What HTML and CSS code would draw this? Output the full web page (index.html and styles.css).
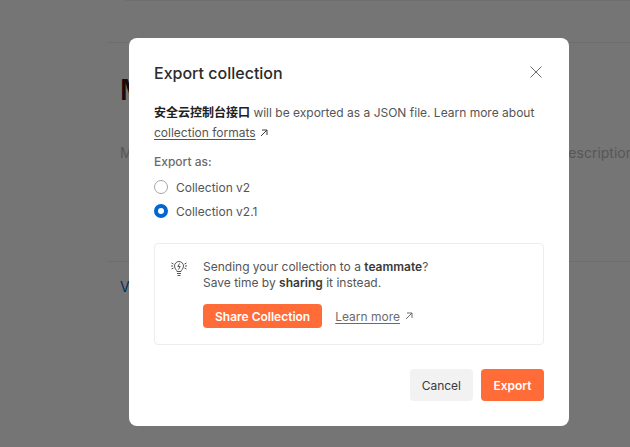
FILE: index.html
```html
<!DOCTYPE html>
<html lang="en">
<head>
    <meta charset="UTF-8">
    <meta name="viewport" content="width=device-width, initial-scale=1.0">
    <title>Export collection</title>
    <link rel="stylesheet" href="styles.css">
</head>
<body>

<!-- page behind the dialog, only what shows around it -->
<div class="page">
    <div class="page-top"></div>
    <div class="page-heading">
        <h1>M</h1>
        <div class="page-desc">
            <span>M</span>
            <span>escription</span>
        </div>
    </div>
    <a class="page-link" href="#">V</a>
</div>

<div class="overlay">
    <div class="modal">
        <div class="modal-header">
            <h2>Export collection</h2>
            <button class="close-btn" aria-label="Close">
                <svg width="12" height="12" viewBox="0 0 12 12"><path d="M.5.5l11 11M11.500.5l-11 11" fill="none" stroke="#6b6b6b"/></svg>
            </button>
        </div>

        <p class="intro">
            <strong class="cjk">安全云控制台接口</strong> will be exported as a JSON file. Learn more about
            <a href="#">collection formats</a>
            <svg class="arrow" width="8" height="8" viewBox="0 0 8 8"><path d="M1 7l6-6M2 1h5v5" fill="none" stroke="#3a3a3a" stroke-width="1"/></svg>
        </p>

        <div class="export-as">Export as:</div>
        <label class="radio-row"><span class="radio"></span>Collection v2</label>
        <label class="radio-row"><span class="radio checked"></span>Collection v2.1</label>

        <div class="share-box">
            <svg class="bulb" width="18" height="18" viewBox="0 0 18 18" fill="none" stroke="#555">
                <path d="M7 12.500c0-1.500-2.500-2.500-2.500-5.500a4.500 4.500 0 0 1 9 0c0 3-2.500 4-2.500 5.500z"/>
                <path d="M7 14.500h4M7.500 16.500h3"/>
                <path d="M9.500 4.500L7.800 7.500h2.400L8.500 10.500"/>
                <path d="M1.500 4l2 1M1.500 10l2-1M1 7h2M16.500 4l-2 1M16.500 10l-2-1M17 7h-2"/>
            </svg>
            <div class="share-body">
                <p>Sending your collection to a <b>teammate</b>?<br>Save time by <b>sharing</b> it instead.</p>
                <div class="share-actions">
                    <button class="btn btn-primary btn-small">Share Collection</button>
                    <a href="#">Learn more</a>
                    <svg class="arrow" width="8" height="8" viewBox="0 0 8 8"><path d="M1 7l6-6M2 1h5v5" fill="none" stroke="#6b6b6b" stroke-width="1"/></svg>
                </div>
            </div>
        </div>

        <div class="modal-footer">
            <button class="btn btn-cancel">Cancel</button>
            <button class="btn btn-primary">Export</button>
        </div>
    </div>
</div>

</body>
</html>
```

FILE: styles.css
```css
/* Global styles */
* {
    box-sizing: border-box;
}
html, body {
    height: 100%;
}
body {
    margin: 0;
    overflow: hidden;
    background-color: #fff;
    color: #212121;
    font-family: Inter, "Noto Sans CJK SC", sans-serif;
    font-size: 12px;
}

/* Page behind the dialog */
.page {
    margin-left: 107px;
    overflow: hidden;
}
.page-top {
    height: 43px;
    padding-left: 18px;
    border-bottom: 1px solid #eee;
}
.page-top::before {
    content: "";
    display: block;
    height: 1px;
    background-color: #f0f0f0;
}
.page-heading {
    height: 219px;
    padding: 29px 0 0 13px;
    border-bottom: 1px solid #eee;
}
.page-heading h1 {
    margin: 0;
    font-size: 28px;
    font-weight: 600;
    line-height: 36px;
    color: #3a1a1a;
}
.page-desc {
    display: flex;
    justify-content: space-between;
    margin: 35px -4px 0 0;
    font-size: 14px;
    line-height: 20px;
    color: #bdbdbd;
    white-space: nowrap;
}
.page-link {
    display: block;
    margin: 15px 0 0 13px;
    font-size: 14px;
    line-height: 20px;
    color: #0265d2;
    text-decoration: none;
}

/* Dialog */
.overlay {
    position: fixed;
    top: 0;
    left: 0;
    right: 0;
    bottom: 0;
    padding: 38px 0 0 129px;
    background-color: rgba(0, 0, 0, 0.54);
}
.modal {
    width: 440px;
    height: 388px;
    padding: 24px 25px 0;
    background-color: #fff;
    border-radius: 8px;
}
.modal-header {
    display: flex;
    justify-content: space-between;
    align-items: center;
    height: 22px;
}
.modal-header h2 {
    margin: 0;
    font-size: 16px;
    font-weight: 500;
    line-height: 22px;
    color: #2b2b2b;
}
.close-btn {
    display: flex;
    margin: -2px 2px 0 0;
    padding: 0;
    border: 0;
    background: none;
}
.intro {
    margin: 19px 0 0;
    font-size: 12px;
    line-height: 20px;
    color: #555;
}
.intro .cjk {
    color: #212121;
    font-weight: 700;
}
.intro a, .share-actions a {
    color: #555;
    text-decoration: underline;
    text-underline-offset: 2px;
}
.arrow {
    margin-left: 1px;
}
.export-as {
    margin-top: 11px;
    font-weight: 500;
    line-height: 16px;
    color: #6b6b6b;
}
.radio-row {
    display: flex;
    align-items: center;
    gap: 8px;
    height: 24px;
    color: #555;
}
.export-as + .radio-row {
    margin-top: 5px;
}
.radio {
    width: 14px;
    height: 14px;
    border: 1px solid #a6a6a6;
    border-radius: 50%;
}
.radio.checked {
    border: 4px solid #0265d2;
}

/* Share box */
.share-box {
    display: flex;
    gap: 15px;
    height: 102px;
    margin-top: 20px;
    padding: 15px 15px 0;
    border: 1px solid #ededed;
    border-radius: 4px;
}
.bulb {
    flex-shrink: 0;
}
.share-body p {
    margin: 0;
    line-height: 16px;
    color: #555;
}
.share-body b {
    font-weight: 600;
    color: #3a3a3a;
}
.share-actions {
    display: flex;
    align-items: center;
    gap: 4px;
    margin-top: 13px;
    color: #6b6b6b;
}
.share-actions a {
    margin-left: 9px;
    color: #6b6b6b;
}

/* Buttons */
.btn {
    min-width: 63px;
    height: 32px;
    padding: 0 12px;
    border: 0;
    border-radius: 4px;
    font-family: inherit;
    font-size: 12px;
    font-weight: 600;
}
.btn-primary {
    background-color: #ff6c37;
    color: #fff;
}
.btn-small {
    height: 24px;
}
.btn-cancel {
    background-color: #f2f2f2;
    color: #3a3a3a;
    font-weight: 400;
}
.modal-footer {
    display: flex;
    justify-content: flex-end;
    gap: 8px;
    margin-top: 24px;
}
```
